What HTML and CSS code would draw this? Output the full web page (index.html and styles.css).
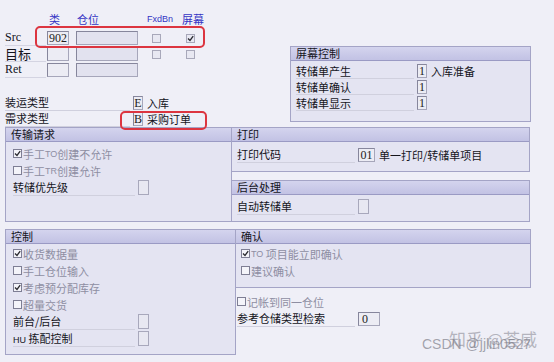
FILE: index.html
```html
<!DOCTYPE html>
<html lang="zh">
<head>
    <meta charset="UTF-8" />
    <meta name="viewport" content="width=device-width, initial-scale=1.0" />
    <title>移动类型</title>
    <link rel="stylesheet" href="styles.css">
</head>
<body>
<div class="screen">
    <!-- Source / destination / return -->
    <div class="top">
        <div class="top-left">
            <div class="col-head">
                <span class="h-typ">类</span>
                <span class="h-bin">仓位</span>
                <span class="h-fxd">FxdBn</span>
                <span class="h-scr">屏幕</span>
            </div>
            <div class="trow">
                <span class="tlbl latin">Src</span>
                <span class="fld f-typ">902</span>
                <span class="fld f-bin"></span>
                <span class="tcb"></span>
                <span class="tcb"><svg viewBox="0 0 7 7"><path d="M1 3.5 L3 5.5 L6.2 1.2" /></svg></span>
            </div>
            <div class="trow">
                <span class="tlbl tall">目标</span>
                <span class="fld f-typ"></span>
                <span class="fld f-bin"></span>
                <span class="tcb"></span>
                <span class="tcb"></span>
            </div>
            <div class="trow">
                <span class="tlbl latin">Ret</span>
                <span class="fld f-typ"></span>
                <span class="fld f-bin"></span>
            </div>
            <div class="frow first">
                <span class="flbl">装运类型</span>
                <span class="fld f-one">E</span>
                <span class="ftxt">入库</span>
            </div>
            <div class="frow">
                <span class="flbl">需求类型</span>
                <span class="fld f-one">B</span>
                <span class="ftxt">采购订单</span>
            </div>
        </div>

        <!-- Screen control -->
        <div class="panel p-screen">
            <div class="ph">屏幕控制</div>
            <div class="pb">
                <div class="prow short"><span class="plbl">转储单产生</span><span class="fld f-one">1</span><span class="ftxt">入库准备</span></div>
                <div class="prow short"><span class="plbl">转储单确认</span><span class="fld f-one">1</span></div>
                <div class="prow short"><span class="plbl">转储单显示</span><span class="fld f-one">1</span></div>
            </div>
        </div>
    </div>

    <div class="mid">
        <!-- Transfer requirement -->
        <div class="panel p-transfer">
            <div class="ph">传输请求</div>
            <div class="pb wide">
                <div class="prow dis"><span class="cb"><svg viewBox="0 0 7 7"><path d="M1 3.5 L3 5.5 L6.2 1.2" /></svg></span>手工<span class="sm">TO</span>创建不允许</div>
                <div class="prow dis"><span class="cb"></span>手工<span class="sm">TR</span>创建允许</div>
                <div class="prow"><span class="plbl">转储优先级</span><span class="fld f-sq"></span></div>
            </div>
        </div>
        <div class="mid-right">
            <div class="panel p-print">
                <div class="ph">打印</div>
                <div class="pb">
                    <div class="prow"><span class="plbl">打印代码</span><span class="fld f-two">01</span><span class="ftxt">单一打印/转储单项目</span></div>
                </div>
            </div>
            <div class="panel p-bg">
                <div class="ph">后台处理</div>
                <div class="pb">
                    <div class="prow"><span class="plbl">自动转储单</span><span class="fld f-sq"></span></div>
                </div>
            </div>
        </div>
    </div>

    <div class="bottom">
        <!-- Control -->
        <div class="panel p-ctrl">
            <div class="ph">控制</div>
            <div class="pb wide">
                <div class="prow dis"><span class="cb"><svg viewBox="0 0 7 7"><path d="M1 3.5 L3 5.5 L6.2 1.2" /></svg></span>收货数据量</div>
                <div class="prow dis"><span class="cb"></span>手工仓位输入</div>
                <div class="prow dis"><span class="cb"><svg viewBox="0 0 7 7"><path d="M1 3.5 L3 5.5 L6.2 1.2" /></svg></span>考虑预分配库存</div>
                <div class="prow dis"><span class="cb"></span>超量交货</div>
                <div class="prow"><span class="plbl">前台/后台</span><span class="fld f-sq"></span></div>
                <div class="prow"><span class="plbl"><span class="sm dark">HU</span> 拣配控制</span><span class="fld f-sq"></span></div>
            </div>
        </div>
        <div class="bottom-right">
            <div class="panel p-confirm">
                <div class="ph">确认</div>
                <div class="pb">
                    <div class="prow dis"><span class="cb"><svg viewBox="0 0 7 7"><path d="M1 3.5 L3 5.5 L6.2 1.2" /></svg></span><span class="sm">TO</span>&nbsp;项目能立即确认</div>
                    <div class="prow dis"><span class="cb"></span>建议确认</div>
                </div>
            </div>
            <div class="loose">
                <div class="prow dis"><span class="cb"></span>记帐到同一仓位</div>
                <div class="prow"><span class="plbl">参考仓储类型检索</span><span class="fld f-num">0</span></div>
            </div>
        </div>
    </div>

    <!-- highlight marks -->
    <div class="hl hl-1"></div>
    <div class="hl hl-2"></div>

    <div class="mark mark-csdn">CSDN @jjlin0527</div>
    <div class="mark mark-zh">知乎 @荟威</div>
</div>
</body>
</html>
```

FILE: styles.css
```css
* {
    box-sizing: border-box;
}
body {
    margin: 0;
    background: #efeff7;
    font-family: "Noto Sans CJK SC", "Noto Sans", sans-serif;
    font-size: 11px;
    color: #14141c;
}
.screen {
    position: relative;
    width: 554px;
    height: 362px;
    padding: 12px 0 0 5px;
    overflow: hidden;
}
.top {
    display: flex;
    height: 115px;
}
.top-left {
    width: 284px;
}
.col-head {
    display: flex;
    height: 18px;
    line-height: 14px;
    color: #3434c4;
    white-space: nowrap;
}
.col-head .h-typ {
    margin-left: 44px;
    width: 28px;
}
.col-head .h-bin {
    width: 70px;
}
.col-head .h-fxd {
    width: 35px;
    font-family: "Liberation Sans", sans-serif;
    font-size: 9px;
}
.trow {
    display: flex;
    align-items: center;
    height: 16px;
}
.tlbl {
    width: 41px;
    height: 16px;
    line-height: 15px;
    border-bottom: 1px solid #d4d4e2;
}
.latin {
    font-family: "Liberation Serif", serif;
    font-size: 12px;
}
.tall {
    font-size: 13px;
}
.fld {
    display: inline-block;
    height: 14px;
    line-height: 12px;
    border: 1px solid #a6a6ba;
    border-top-color: #86869c;
    border-left-color: #86869c;
    background: #ececf4;
    font-family: "Liberation Serif", serif;
    font-size: 12px;
    text-align: center;
    color: #222;
}
.f-typ {
    width: 22px;
    margin-left: 1px;
}
.f-bin {
    width: 62px;
    margin-left: 7px;
    background: #e2e2ef;
}
.tcb {
    width: 9px;
    height: 9px;
    margin-left: 14px;
    border: 1px solid #a8a8ba;
    background: #e8e8f2;
}
.tcb + .tcb {
    margin-left: 25px;
}
svg {
    display: block;
    width: 7px;
    height: 7px;
}
svg path {
    fill: none;
    stroke: #2a2a30;
    stroke-width: 1.3;
}
.frow {
    display: flex;
    align-items: center;
    height: 16px;
}
.frow.first {
    margin-top: 17px;
}
.flbl {
    width: 125px;
    height: 16px;
    line-height: 15px;
    border-bottom: 1px solid #d0d0de;
}
.f-one {
    width: 10px;
    margin-left: 3px;
}
.f-two {
    width: 17px;
    margin-left: 3px;
}
.f-sq {
    width: 11px;
    height: 15px;
    margin-left: 3px;
    background: #e8e8f2;
    border-color: #a8a8bc;
}
.f-num {
    width: 22px;
    margin-left: 3px;
    text-align: left;
    padding-left: 3px;
}
.ftxt {
    margin-left: 4px;
}

/* group boxes */
.panel {
    border: 1px solid #a4a4c6;
    background: #e4e4f2;
}
.ph {
    height: 14px;
    line-height: 13px;
    padding-left: 5px;
    background: linear-gradient(#d4d4ee, #c2c2e4);
    border-bottom: 1px solid #9a9ac4;
}
.pb {
    padding: 3px 0 0 5px;
}
.pb.wide {
    padding-left: 7px;
}
.prow {
    display: flex;
    align-items: center;
    height: 17px;
    white-space: nowrap;
}
.prow.short {
    height: 16px;
}
.plbl {
    width: 118px;
    height: 100%;
    line-height: 16px;
    border-bottom: 1px solid #d0d0de;
}
.pb.wide .plbl {
    width: 122px;
}
.dis {
    color: #8e8ea2;
}
.cb {
    width: 9px;
    height: 9px;
    margin-right: 1px;
    border: 1px solid #7e7e94;
    background: #f4f4fa;
}
.sm {
    font-family: "Liberation Sans", sans-serif;
    font-size: 9px;
}
.sm.dark {
    color: #14141c;
}
.p-screen {
    width: 241px;
    height: 76px;
    margin-top: 34px;
    margin-left: 1px;
}
.p-screen .pb {
    padding-top: 2px;
}
.mid {
    display: flex;
}
.p-transfer {
    width: 227px;
    height: 95px;
}
.mid-right {
    width: 299px;
    margin-left: -1px;
}
.p-print {
    height: 45px;
}
.p-print .pb {
    padding-top: 4px;
}
.p-bg {
    height: 42px;
    margin-top: 8px;
}
.bottom {
    display: flex;
    margin-top: 7px;
}
.p-ctrl {
    width: 231px;
    height: 126px;
}
.p-ctrl .pb {
    padding-top: 1px;
}
.bottom-right {
    width: 296px;
    margin-left: -1px;
}
.p-confirm {
    height: 59px;
}
.p-confirm .pb {
    padding-top: 1px;
}
.loose {
    padding: 5px 0 0 2px;
}

/* red highlight frames */
.hl {
    position: absolute;
    border: 2px solid #dc3540;
    border-radius: 5px;
}
.hl-1 {
    left: 35px;
    top: 26px;
    width: 170px;
    height: 22px;
}
.hl-2 {
    left: 120px;
    top: 111px;
    width: 87px;
    height: 19px;
}

/* watermark */
.mark {
    position: absolute;
    white-space: nowrap;
}
.mark-csdn {
    left: 422px;
    top: 336px;
    font-family: "Liberation Sans", sans-serif;
    font-size: 14px;
    color: #a2a2ac;
    text-shadow: 0 0 1px #fff;
}
.mark-zh {
    left: 449px;
    top: 326px;
    font-size: 17px;
    color: rgba(120, 120, 132, 0.5);
}
```
